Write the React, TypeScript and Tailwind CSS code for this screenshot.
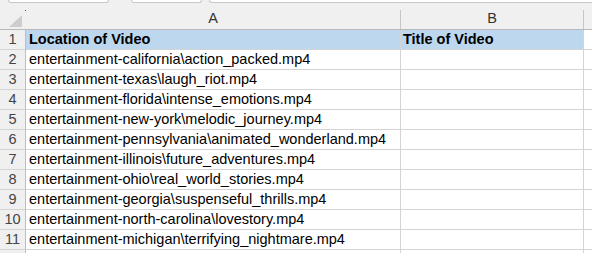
const rows = [
  "entertainment-california\\action_packed.mp4",
  "entertainment-texas\\laugh_riot.mp4",
  "entertainment-florida\\intense_emotions.mp4",
  "entertainment-new-york\\melodic_journey.mp4",
  "entertainment-pennsylvania\\animated_wonderland.mp4",
  "entertainment-illinois\\future_adventures.mp4",
  "entertainment-ohio\\real_world_stories.mp4",
  "entertainment-georgia\\suspenseful_thrills.mp4",
  "entertainment-north-carolina\\lovestory.mp4",
  "entertainment-michigan\\terrifying_nightmare.mp4",
]

const font = "font-['Liberation_Sans',Arial,sans-serif]"

const Row = ({ n, a, b, head }: { n?: number; a: string; b: string; head?: boolean }) => (
  <div className="flex h-5">
    <div className="w-[26px] shrink-0 flex items-center justify-center bg-[#f0f0f0] border-r border-r-[#bdbdbd] border-b border-b-[#d4d4d4] text-[14.5px] text-[#444]">
      {n}
    </div>
    <div
      className={`w-[375px] shrink-0 flex items-end pl-[3px] border-r border-b border-[#d4d4d4] text-[14.5px] leading-[19px] text-black whitespace-nowrap overflow-hidden ${
        head ? "bg-[#bdd7ee] font-bold" : "bg-white"
      }`}
    >
      {a}
    </div>
    <div
      className={`w-[183px] shrink-0 flex items-end pl-[2px] border-r border-b border-[#d4d4d4] text-[14.5px] leading-[19px] text-black whitespace-nowrap ${
        head ? "bg-[#bdd7ee] font-bold" : "bg-white"
      }`}
    >
      {b}
    </div>
    <div className="flex-1 bg-white border-b border-[#d4d4d4]" />
  </div>
)

export default function App() {
  return (
    <div className={`w-[592px] h-[253px] overflow-hidden bg-white ${font}`}>
      {/* formula bar bottoms */}
      <div className="flex h-[3px] bg-[#f0f0f0]">
        <div className="ml-[8px] w-[101px] bg-white border border-t-0 border-[#c8c8c8] rounded-b-[4px]" />
        <div className="ml-[22px] w-[71px] bg-white border border-t-0 border-[#c8c8c8] rounded-b-[4px]" />
        <div className="ml-[7px] flex-1 bg-white border border-t-0 border-r-0 border-[#c8c8c8] rounded-bl-[4px]" />
      </div>
      {/* column headers */}
      <div className="flex h-[27px] bg-[#f0f0f0] border-b border-[#b9b9b9]">
        <div className="w-[26px] shrink-0 flex justify-end">
          <div className="flex-1 flex items-end justify-end pb-[2px] pr-[3px]">
            <svg width="13" height="12" viewBox="0 0 13 12">
              <polygon points="13,0 13,12 0,12" fill="#cdcdcd" />
            </svg>
          </div>
          <div className="w-px mt-[7px] h-px bg-[#555]" />
        </div>
        <div className="w-[375px] shrink-0 flex">
          <div className="flex-1 flex items-center justify-center pt-[5px] text-[14.5px] text-[#333]">A</div>
          <div className="w-px mt-[7px] bg-[#c6c6c6]" />
        </div>
        <div className="w-[183px] shrink-0 flex">
          <div className="flex-1 flex items-center justify-center pt-[5px] text-[14.5px] text-[#333]">B</div>
          <div className="w-px mt-[7px] bg-[#c6c6c6]" />
        </div>
        <div className="flex-1" />
      </div>
      <Row n={1} a="Location of Video" b="Title of Video" head />
      {rows.map((r, i) => (
        <Row key={i} n={i + 2} a={r} b="" />
      ))}
      <Row a="" b="" />
    </div>
  )
}
